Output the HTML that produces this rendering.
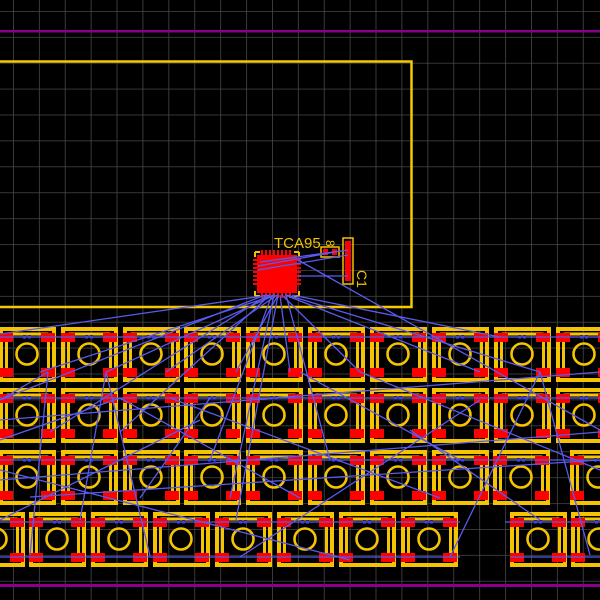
<!DOCTYPE html>
<html><head><meta charset="utf-8"><style>
html,body{margin:0;padding:0;background:#000;width:600px;height:600px;overflow:hidden}
svg{display:block}
</style></head><body>
<svg width="600" height="600" viewBox="0 0 600 600" xmlns="http://www.w3.org/2000/svg">
<defs>
<pattern id="g" x="13" y="11" width="25.9" height="25.9" patternUnits="userSpaceOnUse">
<path d="M0 0H26M0 0V26" stroke="#484848" stroke-width="1.6" fill="none"/>
</pattern>
<g id="fp">
<rect x="-26" y="-25" width="53" height="51" fill="none" stroke="#f5c400" stroke-width="4"/>
<path d="M-20.5 -20V21M21.5 -20V21M-20.5 -20H21.5" stroke="#f5c400" stroke-width="3" fill="none"/>
<circle cx="0" cy="0" r="10.5" fill="none" stroke="#f5c400" stroke-width="2.6"/>
<rect x="-28" y="-21" width="14" height="9" fill="#ff0000"/>
<rect x="14" y="-21" width="14" height="9" fill="#ff0000"/>
<rect x="-28" y="14" width="14" height="9" fill="#ff0000"/>
<rect x="14" y="14" width="14" height="9" fill="#ff0000"/>
<rect x="-4" y="-19" width="3" height="4" fill="#2020a0"/>
<rect x="1" y="-19" width="3" height="4" fill="#2020a0"/>
</g>
</defs>
<rect width="600" height="600" fill="#000"/>
<rect width="600" height="600" fill="url(#g)"/>
<rect x="-5" y="30" width="610" height="2.5" fill="#8a008a"/>
<rect x="-5" y="584" width="610" height="3" fill="#8a008a"/>
<path d="M-5 61.5H411.5V307H-5" fill="none" stroke="#f5c800" stroke-width="2.5"/>

<g>
<use href="#fp" x="27" y="354"/><use href="#fp" x="89" y="354"/><use href="#fp" x="151" y="354"/><use href="#fp" x="212" y="354"/><use href="#fp" x="274" y="354"/><use href="#fp" x="336" y="354"/><use href="#fp" x="398" y="354"/><use href="#fp" x="460" y="354"/><use href="#fp" x="522" y="354"/><use href="#fp" x="584" y="354"/>
<use href="#fp" x="27" y="415"/><use href="#fp" x="89" y="415"/><use href="#fp" x="151" y="415"/><use href="#fp" x="212" y="415"/><use href="#fp" x="274" y="415"/><use href="#fp" x="336" y="415"/><use href="#fp" x="398" y="415"/><use href="#fp" x="460" y="415"/><use href="#fp" x="522" y="415"/><use href="#fp" x="584" y="415"/>
<use href="#fp" x="27" y="477"/><use href="#fp" x="89" y="477"/><use href="#fp" x="151" y="477"/><use href="#fp" x="212" y="477"/><use href="#fp" x="274" y="477"/><use href="#fp" x="336" y="477"/><use href="#fp" x="398" y="477"/><use href="#fp" x="460" y="477"/><use href="#fp" x="521" y="477"/><use href="#fp" x="598" y="477"/>
<use href="#fp" x="-4" y="539"/><use href="#fp" x="57" y="539"/><use href="#fp" x="119" y="539"/><use href="#fp" x="181" y="539"/><use href="#fp" x="243" y="539"/><use href="#fp" x="305" y="539"/><use href="#fp" x="367" y="539"/><use href="#fp" x="429" y="539"/><use href="#fp" x="538" y="539"/><use href="#fp" x="599" y="539"/>
</g>

<g>
<rect x="257" y="255" width="40" height="38" fill="#ff0000"/>
<path d="M255 252h5M255 252v5M299 252h-5M299 252v5M255 296h5M255 296v-5M299 296h-5M299 296v-5" stroke="#f2c300" stroke-width="2"/>
<path d="M262 250v5M266 250v5M270 250v5M274 250v5M278 250v5M282 250v5M286 250v5M290 250v5M262 293v5M266 293v5M270 293v5M274 293v5M278 293v5M282 293v5M286 293v5M290 293v5M253 260h5M253 264h5M253 268h5M253 272h5M253 276h5M253 280h5M253 284h5M296 260h5M296 264h5M296 268h5M296 272h5M296 276h5M296 280h5M296 284h5" stroke="#ff0000" stroke-width="2"/>
<text x="274" y="248" font-family="Liberation Sans, sans-serif" font-size="15" fill="#f2c300">TCA95</text>
<text transform="translate(326,240) rotate(90)" font-family="Liberation Sans, sans-serif" font-size="12" fill="#f2c300">8</text>
<rect x="321" y="247" width="18" height="10" fill="none" stroke="#f2c300" stroke-width="1.5"/>
<rect x="323" y="249" width="5" height="6" fill="#ff0000"/><rect x="332" y="249" width="5" height="6" fill="#ff0000"/>
<rect x="343" y="238" width="10" height="46" fill="none" stroke="#f2c300" stroke-width="1.5"/>
<rect x="345" y="241" width="6" height="40" fill="#ff0000"/>
<text transform="translate(357,270) rotate(90)" font-family="Liberation Sans, sans-serif" font-size="14" fill="#f2c300">C1</text>
</g>

<g stroke="#5a5aee" stroke-width="1.3" fill="none">
<path d="M-5 337H600M-5 398H600M-5 460H600M-5 522H460M505 522H600M-5 557H460M510 557H600"/>
<path d="M348 250L260 262M348 255L258 270M335 252L258 266M348 276L298 276"/>
<path d="M270 295L0 334M275 295L40 372M275 295L106 372M277 295L166 372M278 295L236 372M280 295L290 372M282 295L360 372M285 295L480 372M287 295L540 372M292 295L500 337"/>
<path d="M265 295L0 400M268 295L50 432M270 295L120 432M272 295L210 460M274 295L230 498M278 295L236 520M286 295L330 460M298 260L600 430"/>
<path d="M0 400L48 372M48 372L30 555M106 372L80 520M106 372L150 556M0 440L120 398M120 398L300 498M0 470L350 560M170 398L440 498M300 372L460 460M360 372L600 470M540 372L450 557"/>
<path d="M0 420L600 372M0 480L600 432M30 497L600 460M240 557L480 400M0 520L200 420M540 372L590 555M410 430L540 520M140 498L210 398"/>
</g>
</svg>
</body></html>
